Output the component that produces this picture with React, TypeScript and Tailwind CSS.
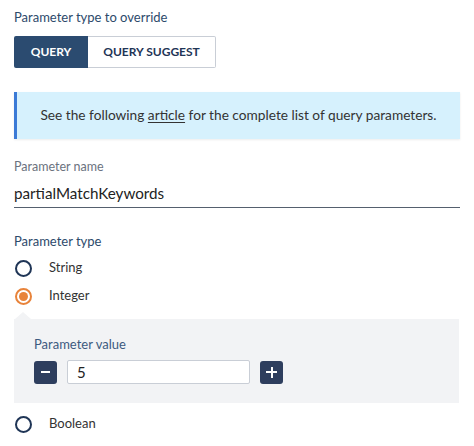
import React, { useState } from 'react';

const Radio = ({ checked, label }: { checked?: boolean; label: string }) => (
  <div className="flex items-center h-[28px]">
    <span
      className={`w-[17px] h-[17px] rounded-full border-2 flex items-center justify-center ml-[1px] ${
        checked ? 'border-[#e8833a]' : 'border-[#1f3556]'
      }`}
    >
      {checked && <span className="w-[9px] h-[9px] rounded-full bg-[#e8833a]" />}
    </span>
    <span className="ml-[17px] text-[13px] text-[#333]">{label}</span>
  </div>
);

export default function App() {
  const [value, setValue] = useState(5);

  return (
    <div className="min-h-screen bg-white px-[14px] pt-[8px] font-['Lato',sans-serif]">
      <div className="text-[13px] leading-[18px] text-[#2d4a6b]">Parameter type to override</div>

      {/* Toggle */}
      <div className="mt-[10px] flex h-[32px] w-[202px]">
        <button className="w-[74px] bg-[#2b4b70] text-white text-[12px] font-bold rounded-l-[2px]">QUERY</button>
        <button className="flex-1 border border-[#c9ced6] border-l-0 text-[#1f3556] text-[12px] font-bold rounded-r-[2px]">
          QUERY SUGGEST
        </button>
      </div>

      {/* Info */}
      <div className="mt-[24px] h-[47px] bg-[#d6f1fd] border-l-[3px] border-[#3b7ad6] shadow-[0_1px_2px_rgba(0,0,0,0.08)] flex items-center justify-center text-[13.7px] text-[#333]">
        <span>
          See the following <span className="underline underline-offset-2">article</span> for the complete list of query parameters.
        </span>
      </div>

      {/* Name */}
      <div className="mt-[20px] text-[12.5px] leading-[16px] text-[#6b7280]">Parameter name</div>
      <div className="mt-[7px] pb-[3px] border-b border-[#55606e] text-[15.2px] leading-[22px] text-[#222]">
        partialMatchKeywords
      </div>

      {/* Type */}
      <div className="mt-[24px] text-[13px] leading-[18px] text-[#2d4a6b]">Parameter type</div>
      <div className="mt-[4px]">
        <Radio label="String" />
        <Radio checked label="Integer" />
      </div>

      <div className="relative mt-[9px] bg-[#f2f3f5] h-[84px] w-[445px] px-[20px] pt-[16px]">
        <span className="absolute -top-[7px] left-[1px] w-0 h-0 border-l-[8px] border-r-[8px] border-b-[7px] border-l-transparent border-r-transparent border-b-[#f2f3f5]" />
        <div className="text-[13px] leading-[18px] text-[#3d5a80]">Parameter value</div>
        <div className="mt-[7px] flex items-center">
          <button
            onClick={() => setValue(value - 1)}
            className="w-[23px] h-[23px] rounded-[3px] bg-[#2e3e5e] flex items-center justify-center"
          >
            <span className="w-[9px] h-[2px] bg-white" />
          </button>
          <input
            value={value}
            onChange={(e) => setValue(Number(e.target.value) || 0)}
            className="ml-[10px] w-[183px] h-[24px] bg-white border border-[#c9ced6] rounded-[2px] px-[9px] text-[15px] text-[#222] outline-none"
          />
          <button
            onClick={() => setValue(value + 1)}
            className="ml-[10px] w-[23px] h-[23px] rounded-[3px] bg-[#2e3e5e] flex items-center justify-center relative"
          >
            <span className="absolute w-[11px] h-[2px] bg-white" />
            <span className="absolute w-[2px] h-[11px] bg-white" />
          </button>
        </div>
      </div>

      <div className="mt-[7px]">
        <Radio label="Boolean" />
      </div>
    </div>
  );
}
